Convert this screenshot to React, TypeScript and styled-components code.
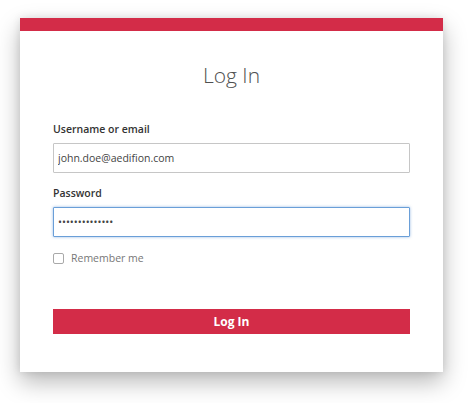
import styled, { createGlobalStyle } from "styled-components";

const GlobalStyle = createGlobalStyle`
  html, body {
    margin: 0;
    padding: 0;
    background: #ffffff;
    font-family: "Open Sans", "Liberation Sans", sans-serif;
  }
`;

const Page = styled.div`
  padding: 18px 31px 40px 20px;
`;

const Card = styled.div`
  width: 423px;
  background: #ffffff;
  box-shadow: 0 10px 22px rgba(0, 0, 0, 0.28), 0 0 8px rgba(0, 0, 0, 0.1);
`;

const TopBar = styled.div`
  height: 13px;
  background: #d32c48;
`;

const Body = styled.form`
  display: flex;
  flex-direction: column;
  padding: 29px 33px 38px 33px;
`;

const Title = styled.h1`
  margin: 0 0 32px 0;
  font-size: 21px;
  line-height: 30px;
  font-weight: 300;
  color: #505050;
  text-align: center;
`;

const Label = styled.label<{ $gap?: number }>`
  display: block;
  margin-top: ${(p) => p.$gap ?? 0}px;
  margin-bottom: 6px;
  font-size: 10.5px;
  line-height: 15px;
  font-weight: 600;
  color: #333;
`;

const Input = styled.input<{ $focused?: boolean }>`
  box-sizing: border-box;
  width: 100%;
  height: 30px;
  margin: 0;
  padding: 0 4px;
  font-family: inherit;
  font-size: 10.5px;
  color: #444;
  background: #fff;
  border: 1px solid ${(p) => (p.$focused ? "#6a9fd8" : "#c6c6c6")};
  box-shadow: ${(p) => (p.$focused ? "0 0 3px rgba(80, 140, 210, 0.6)" : "none")};
  border-radius: 1px;
  outline: none;
`;

const CheckRow = styled.label`
  display: flex;
  align-items: center;
  gap: 7px;
  margin-top: 14px;
  font-size: 10.5px;
  line-height: 15px;
  color: #777;
`;

const Box = styled.span`
  box-sizing: border-box;
  width: 11px;
  height: 11px;
  border: 1px solid #a9a9a9;
  border-radius: 2px;
  background: #fff;
`;

const Button = styled.button`
  margin-top: 43px;
  height: 25px;
  border: none;
  padding: 0;
  background: #d32c48;
  color: #fff;
  font-family: inherit;
  font-size: 12px;
  font-weight: 700;
  cursor: pointer;
`;

export default function App() {
  return (
    <>
      <GlobalStyle />
      <Page>
        <Card>
          <TopBar />
          <Body onSubmit={(e) => e.preventDefault()}>
            <Title>Log In</Title>
            <Label>Username or email</Label>
            <Input defaultValue="john.doe@aedifion.com" />
            <Label $gap={13}>Password</Label>
            <Input $focused type="password" defaultValue="abcdefghijklmn" />
            <CheckRow>
              <Box />
              Remember me
            </CheckRow>
            <Button type="submit">Log In</Button>
          </Body>
        </Card>
      </Page>
    </>
  );
}
